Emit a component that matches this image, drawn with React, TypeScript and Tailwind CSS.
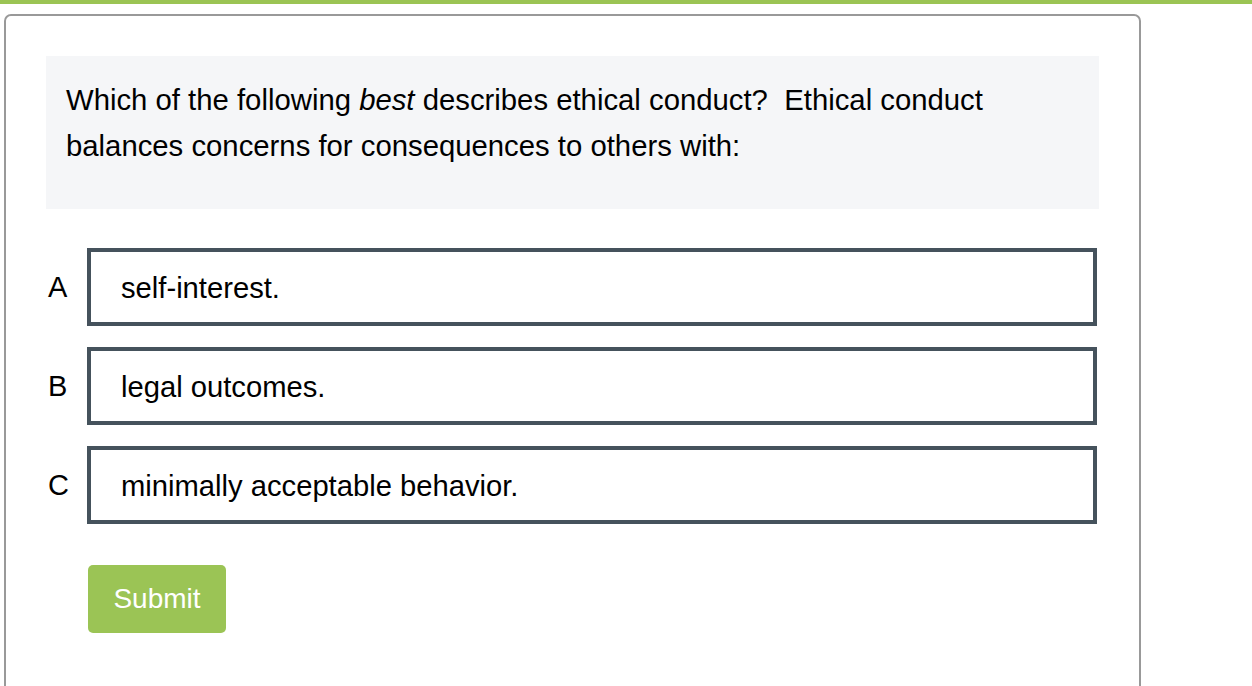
const options = [
  { letter: 'A', text: 'self-interest.' },
  { letter: 'B', text: 'legal outcomes.' },
  { letter: 'C', text: 'minimally acceptable behavior.' },
];

export default function App() {
  return (
    <div
      className="min-h-screen bg-white text-black"
      style={{ fontFamily: '"Liberation Sans", Arial, Helvetica, sans-serif' }}
    >
      <div className="h-[4px] w-full bg-[#9bc454]" />

      <div className="ml-[4px] mt-[10px] w-[1137px] rounded-[7px] border-2 border-[#999999] px-[40px] pt-[40px] pb-[80px]">
        <div className="w-[1053px] bg-[#f5f6f8] px-[20px] pt-[21px] pb-[40px] text-[29.3px] leading-[46px]">
          <p>
            Which of the following <em>best</em> describes ethical conduct?{'\u00a0 '}Ethical conduct
            balances concerns for consequences to others with:
          </p>
        </div>

        <div className="mt-[39px] flex flex-col gap-[21px]">
          {options.map((option) => (
            <div key={option.letter} className="flex items-center">
              <div className="w-[41px] pl-[2px] text-[29px] leading-none">{option.letter}</div>
              <div className="flex h-[78px] w-[1010px] items-center border-4 border-[#45525c] pl-[30px] pt-[3px] text-[29.2px]">
                {option.text}
              </div>
            </div>
          ))}
        </div>

        <button className="ml-[42px] mt-[41px] flex h-[68px] w-[138px] items-center justify-center rounded-[5px] bg-[#9bc455] text-[28px] text-white">
          Submit
        </button>
      </div>
    </div>
  );
}
